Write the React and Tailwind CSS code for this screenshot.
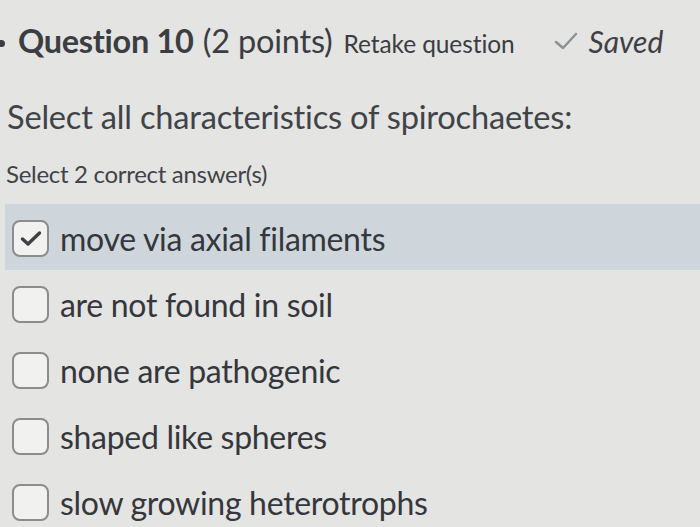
import React from 'react';

const options = [
  { label: 'move via axial filaments', checked: true },
  { label: 'are not found in soil', checked: false },
  { label: 'none are pathogenic', checked: false },
  { label: 'shaped like spheres', checked: false },
  { label: 'slow growing heterotrophs', checked: false },
];

const Checkbox = ({ checked }) => (
  <div className="w-[37px] h-[37px] shrink-0 rounded-[8px] border-2 border-[#8a8c8e] bg-[#f1f1ef] flex items-center justify-center">
    {checked && (
      <svg width="22" height="17" viewBox="0 0 22 17" fill="none">
        <path d="M2.5 9 L8 14 L19.5 3" stroke="#3d4044" strokeWidth="3.4" strokeLinecap="round" strokeLinejoin="round" />
      </svg>
    )}
  </div>
);

export default function App() {
  return (
    <div className="w-[700px] h-[527px] overflow-hidden bg-[#e4e4e2] text-[#3a3d42] font-['Lato','Noto_Sans',sans-serif]">
      {/* Header */}
      <div className="flex items-baseline pt-[19px] pl-[18px] h-[97px] relative">
        <span className="absolute left-0 top-[40px] w-[5px] h-[7px] bg-[#3a3d42] rounded-r-full" />
        <span className="text-[32.5px] leading-[40px] font-bold tracking-[-0.3px]">Question 10</span>
        <span className="text-[32.5px] leading-[40px] ml-[9px] tracking-[-0.2px]">(2 points)</span>
        <span className="text-[24.5px] ml-[11px] tracking-[-0.1px]">Retake question</span>
        <span className="text-[30px] ml-[38px]">
          <svg className="inline align-[2px]" width="26" height="20" viewBox="0 0 26 20" fill="none">
            <path d="M3 11 L10 17 L23 3" stroke="#8d9095" strokeWidth="2.4" strokeLinecap="round" strokeLinejoin="round" />
          </svg>
        </span>
        <span className="text-[30px] italic ml-[10px] text-[#3d4045]">Saved</span>
      </div>

      {/* Question */}
      <div className="pl-[7px] text-[32.6px] leading-[40px] tracking-[-0.2px] text-[#404347]">
        Select all characteristics of spirochaetes:
      </div>
      <div className="pl-[6px] mt-[23px] text-[24px] leading-[28px] tracking-[-0.3px] text-[#404347]">
        Select 2 correct answer(s)
      </div>

      {/* Options */}
      <div className="mt-[16px] flex flex-col">
        {options.map((o, i) => (
          <div
            key={i}
            className={`ml-[5px] h-[66px] flex items-center gap-[11px] pl-[7px] pt-[3px] ${o.checked ? 'bg-[#cfd6db]' : ''}`}
          >
            <Checkbox checked={o.checked} />
            <span className="text-[32px] tracking-[-0.3px] text-[#34373c]">{o.label}</span>
          </div>
        ))}
      </div>
    </div>
  );
}
